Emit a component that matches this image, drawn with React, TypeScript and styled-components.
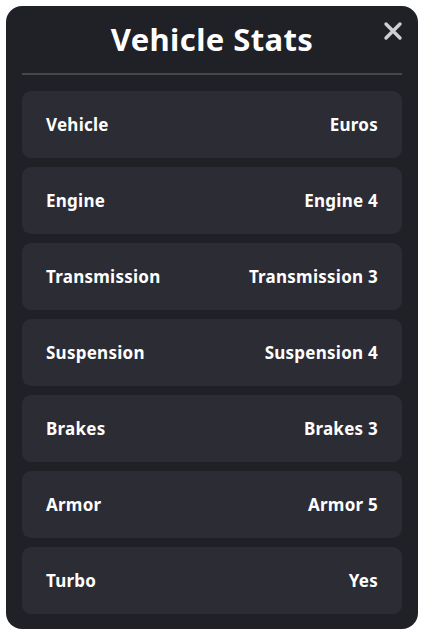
import styled, { createGlobalStyle } from "styled-components";

type Stat = {
  label: string;
  value: string;
};

const stats: Stat[] = [
  { label: "Vehicle", value: "Euros" },
  { label: "Engine", value: "Engine 4" },
  { label: "Transmission", value: "Transmission 3" },
  { label: "Suspension", value: "Suspension 4" },
  { label: "Brakes", value: "Brakes 3" },
  { label: "Armor", value: "Armor 5" },
  { label: "Turbo", value: "Yes" },
];

const GlobalStyle = createGlobalStyle`
  body {
    margin: 0;
    padding: 6px 7px 6px 6px;
    background: #ffffff;
    font-family: "Noto Sans", "Open Sans", sans-serif;
  }
`;

const Panel = styled.div`
  position: relative;
  background: #202027;
  border-radius: 16px;
  padding: 15px 16px 15px;
  color: #ffffff;
`;

const Header = styled.div`
  display: flex;
  justify-content: center;
  padding-bottom: 16px;
  border-bottom: 2px solid #45454b;
`;

const Title = styled.h1`
  margin: 0;
  font-size: 31px;
  font-weight: 700;
  line-height: 36px;
  letter-spacing: 0.4px;
`;

const Close = styled.button`
  position: absolute;
  top: 15px;
  right: 15px;
  background: none;
  border: 0;
  padding: 0;
  color: #cfcfd3;
  cursor: pointer;
  display: flex;
`;

const List = styled.div`
  display: grid;
  gap: 9px;
  margin-top: 16px;
`;

const Row = styled.div`
  display: flex;
  align-items: center;
  justify-content: space-between;
  height: 67px;
  padding: 0 24px;
  background: #2c2c34;
  border-radius: 9px;
  font-size: 17px;
  font-weight: 700;
  letter-spacing: 0.25px;
`;

const App = () => (
  <>
    <GlobalStyle />
    <Panel>
      <Header>
        <Title>Vehicle Stats</Title>
      </Header>
      <Close aria-label="Close">
        <svg width="20" height="20" viewBox="0 0 20 20">
          <path
            d="M3 3 L17 17 M17 3 L3 17"
            stroke="currentColor"
            strokeWidth="3.4"
            strokeLinecap="round"
          />
        </svg>
      </Close>
      <List>
        {stats.map((s) => (
          <Row key={s.label}>
            <span>{s.label}</span>
            <span>{s.value}</span>
          </Row>
        ))}
      </List>
    </Panel>
  </>
);

export default App;
